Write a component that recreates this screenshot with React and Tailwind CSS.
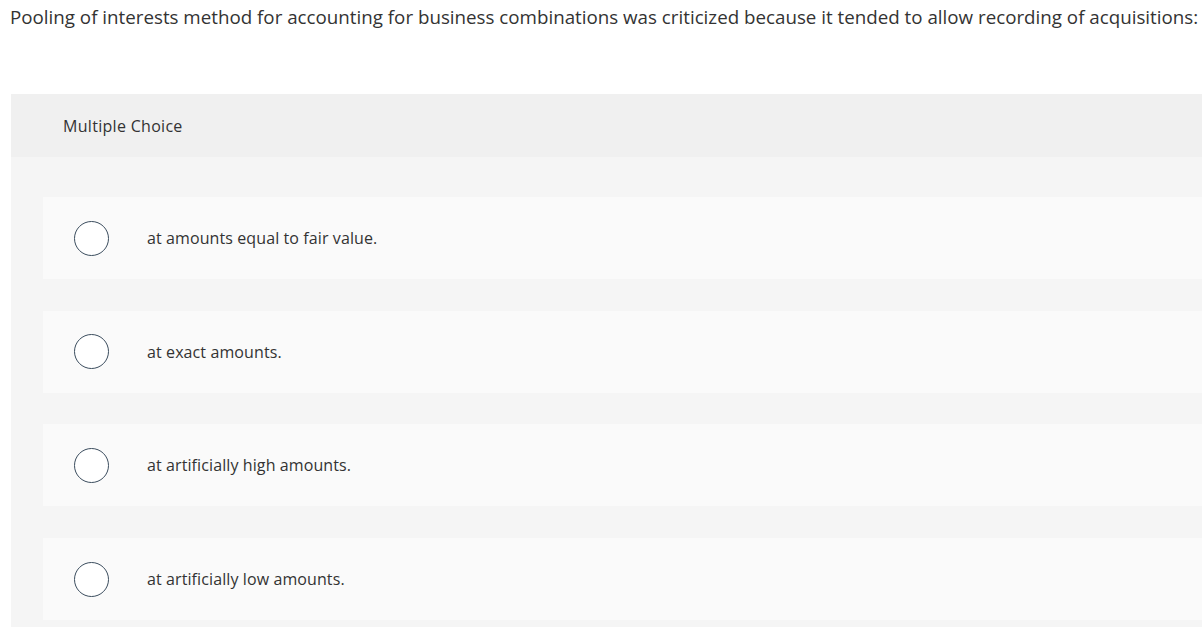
const OPTIONS = [
  "at amounts equal to fair value.",
  "at exact amounts.",
  "at artificially high amounts.",
  "at artificially low amounts.",
];

const Option = ({ label }) => (
  <div className="flex items-center h-[82px] bg-[#fafafa] pl-[31px]">
    <span className="w-[35px] h-[35px] rounded-full border-[1.5px] border-[#3b4d5e] bg-white shrink-0" />
    <span className="ml-[38px] text-[16px] tracking-[0.1px] text-[#333]">{label}</span>
  </div>
);

export default function App() {
  return (
    <div
      className="w-[1202px] h-[627px] overflow-hidden bg-white text-[#333]"
      style={{ fontFamily: '"Open Sans", "Liberation Sans", sans-serif' }}
    >
      <p className="pl-[10px] pt-[5px] text-[18.75px] leading-[24px] whitespace-nowrap">
        Pooling of interests method for accounting for business combinations was criticized because it tended to allow recording of acquisitions:
      </p>
      <div className="ml-[11px] mt-[65px] w-[1240px] bg-[#f5f5f5]">
        <div className="h-[63px] bg-[#f0f0f0] flex items-center pl-[52px] text-[16px] tracking-[0.3px]">Multiple Choice</div>
        <div className="flex flex-col gap-[31.7px] pt-[40px] pl-[32px] pb-[10px]">
          {OPTIONS.map((o) => (
            <Option key={o} label={o} />
          ))}
        </div>
      </div>
    </div>
  );
}
